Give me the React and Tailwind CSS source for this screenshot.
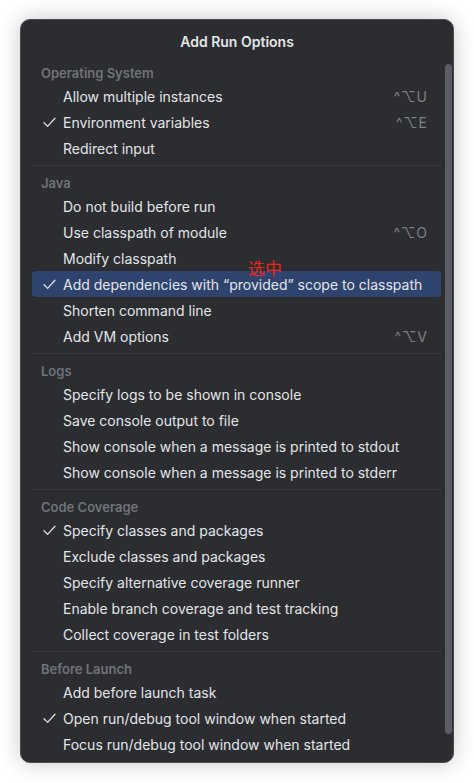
import React from "react";

const sections = [
    {
        name: "Operating System",
        items: [
            { label: "Allow multiple instances", keys: "^⌥U" },
            { label: "Environment variables", keys: "^⌥E", checked: true },
            { label: "Redirect input" },
        ],
    },
    {
        name: "Java",
        items: [
            { label: "Do not build before run" },
            { label: "Use classpath of module", keys: "^⌥O" },
            { label: "Modify classpath" },
            { label: "Add dependencies with “provided” scope to classpath", checked: true, selected: true },
            { label: "Shorten command line" },
            { label: "Add VM options", keys: "^⌥V" },
        ],
    },
    {
        name: "Logs",
        items: [
            { label: "Specify logs to be shown in console" },
            { label: "Save console output to file" },
            { label: "Show console when a message is printed to stdout" },
            { label: "Show console when a message is printed to stderr" },
        ],
    },
    {
        name: "Code Coverage",
        items: [
            { label: "Specify classes and packages", checked: true },
            { label: "Exclude classes and packages" },
            { label: "Specify alternative coverage runner" },
            { label: "Enable branch coverage and test tracking" },
            { label: "Collect coverage in test folders" },
        ],
    },
    {
        name: "Before Launch",
        items: [
            { label: "Add before launch task" },
            { label: "Open run/debug tool window when started", checked: true },
            { label: "Focus run/debug tool window when started" },
        ],
    },
];

function Check() {
    return (
        <svg width="13" height="11" viewBox="0 0 13 11" fill="none">
            <path d="M1 5.8 L4.6 9.4 L12 1.2" stroke="#dfe1e5" strokeWidth="1.3" strokeLinecap="round" strokeLinejoin="round" />
        </svg>
    );
}

function Row({ item }) {
    return (
        <div className={"relative flex items-center h-[26px] rounded-[4px] " + (item.selected ? "bg-[#2e436e]" : "")}>
            <div className="w-[31px] shrink-0 pl-[11px] flex items-center">
                {item.checked && <Check />}
            </div>
            <div className="grow text-[14px] text-[#e3e5e8] whitespace-nowrap">{item.label}</div>
            {item.keys && (
                <div className="pr-[13px] text-[14px] text-[#7d8087] tracking-[1px]">{item.keys}</div>
            )}
        </div>
    );
}

export default function App() {
    return (
        <div className="w-[474px] h-[783px] bg-white pt-[19px] pl-[20px]" style={{ fontFamily: "Inter, 'Noto Sans', sans-serif" }}>
            <div className="relative w-[434px] h-[744px] rounded-[10px] bg-[#2b2d30] border border-[#4a4c51] shadow-[0_0_22px_rgba(0,0,0,0.22)] overflow-hidden">
                <div className="h-[41px] pt-[2px] flex items-center justify-center text-[14px] font-semibold text-[#e3e5e8]">
                    Add Run Options
                </div>
                <div className="ml-[11px] mr-[12px]">
                    {sections.map((sec, i) => (
                        <div key={sec.name}>
                            {i > 0 && <div className="h-px bg-[#393b40] mt-[4px] mb-[5px]" />}
                            <div className="h-[22px] pt-[4px] flex items-center pl-[9px] text-[13px] font-semibold text-[#6f737a]">
                                {sec.name}
                            </div>
                            {sec.items.map((item) => <Row key={item.label} item={item} />)}
                        </div>
                    ))}
                </div>
                <div className="absolute right-[1px] top-[44px] w-[7px] h-[670px] rounded-full bg-[#5a5d63]" />
                <div className="absolute left-[227px] top-[236px] text-[17px] leading-[24px] text-[#e8251f]" style={{ fontFamily: "'Noto Sans CJK SC', sans-serif" }}>
                    选中
                </div>
            </div>
        </div>
    );
}
